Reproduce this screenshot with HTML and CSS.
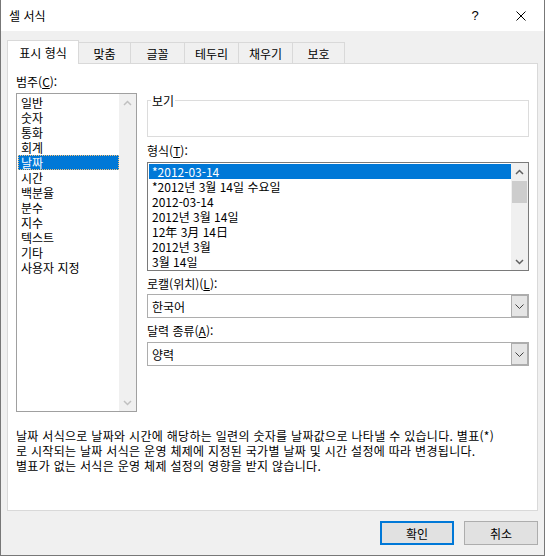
FILE: index.html
```html
<!DOCTYPE html>
<html lang="ko">
<head>
<meta charset="utf-8">
<title>셀 서식</title>
<link rel="stylesheet" href="styles.css">
</head>
<body>
<div class="window">
  <div class="titlebar">
    <span class="title">셀 서식</span>
    <span class="tbtn help">?</span>
    <span class="tbtn close"><svg width="10" height="10" viewBox="0 0 10 10"><path d="M0.5 0.5L9.5 9.5M9.5 0.5L0.5 9.5" stroke="#000" stroke-width="1" fill="none"/></svg></span>
  </div>
  <div class="tabs">
    <div class="tab sel w1">표시 형식</div>
    <div class="tab w2">맞춤</div>
    <div class="tab w3">글꼴</div>
    <div class="tab w3">테두리</div>
    <div class="tab w3">채우기</div>
    <div class="tab w2">보호</div>
  </div>
  <div class="panel">
    <div class="main">
      <div class="left">
        <div class="label">범주(<u>C</u>):</div>
        <div class="list catlist">
          <div class="items">
            <div class="item">일반</div>
            <div class="item">숫자</div>
            <div class="item">통화</div>
            <div class="item">회계</div>
            <div class="item selected focus">날짜</div>
            <div class="item">시간</div>
            <div class="item">백분율</div>
            <div class="item">분수</div>
            <div class="item">지수</div>
            <div class="item">텍스트</div>
            <div class="item">기타</div>
            <div class="item">사용자 지정</div>
          </div>
          <div class="scrollbar disabled">
            <div class="sbtn"><svg width="9" height="6" viewBox="0 0 9 6"><path d="M1 5L4.5 1.5L8 5" stroke="currentColor" stroke-width="1.5" fill="none"/></svg></div>
            <div class="track"></div>
            <div class="sbtn"><svg width="9" height="6" viewBox="0 0 9 6"><path d="M1 1L4.5 4.5L8 1" stroke="currentColor" stroke-width="1.5" fill="none"/></svg></div>
          </div>
        </div>
      </div>
      <div class="right">
        <fieldset class="preview">
          <legend>보기</legend>
          <div class="preview-body"></div>
        </fieldset>
        <div class="label gap6">형식(<u>T</u>):</div>
        <div class="list fmtlist">
          <div class="items">
            <div class="item selected">*2012-03-14</div>
            <div class="item">*2012년 3월 14일 수요일</div>
            <div class="item">2012-03-14</div>
            <div class="item">2012년 3월 14일</div>
            <div class="item">12年 3月 14日</div>
            <div class="item">2012년 3월</div>
            <div class="item">3월 14일</div>
          </div>
          <div class="scrollbar">
            <div class="sbtn"><svg width="9" height="6" viewBox="0 0 9 6"><path d="M1 5L4.5 1.5L8 5" stroke="currentColor" stroke-width="1.5" fill="none"/></svg></div>
            <div class="track"><div class="thumb"></div></div>
            <div class="sbtn"><svg width="9" height="6" viewBox="0 0 9 6"><path d="M1 1L4.5 4.5L8 1" stroke="currentColor" stroke-width="1.5" fill="none"/></svg></div>
          </div>
        </div>
        <div class="label gap5">로캘(위치)(<u>L</u>):</div>
        <div class="combo gap3">
          <span class="combo-text">한국어</span>
          <span class="dd"><svg width="9" height="5" viewBox="0 0 9 5"><path d="M0.5 0.5L4.5 4.5L8.5 0.5" stroke="#404040" stroke-width="1" fill="none"/></svg></span>
        </div>
        <div class="label gap5">달력 종류(<u>A</u>):</div>
        <div class="combo gap4">
          <span class="combo-text">양력</span>
          <span class="dd"><svg width="9" height="5" viewBox="0 0 9 5"><path d="M0.5 0.5L4.5 4.5L8.5 0.5" stroke="#404040" stroke-width="1" fill="none"/></svg></span>
        </div>
      </div>
    </div>
    <p class="desc">날짜 서식으로 날짜와 시간에 해당하는 일련의 숫자를 날짜값으로 나타낼 수 있습니다. 별표(*)<br>로 시작되는 날짜 서식은 운영 체제에 지정된 국가별 날짜 및 시간 설정에 따라 변경됩니다.<br>별표가 없는 서식은 운영 체제 설정의 영향을 받지 않습니다.</p>
  </div>
  <div class="buttons">
    <button class="btn default">확인</button>
    <button class="btn">취소</button>
  </div>
</div>
</body>
</html>
```

FILE: styles.css
```css
* { box-sizing: border-box; }
html, body { margin: 0; padding: 0; }
body {
  font-family: "Noto Sans CJK KR", "Noto Sans", sans-serif;
  font-size: 12px;
  color: #000;
  background: #fff;
}
.window {
  width: 545px;
  height: 556px;
  background: #f0f0f0;
  border: 1px solid #777;
  border-top: none;
  display: flex;
  flex-direction: column;
}
.titlebar {
  height: 31px;
  background: #fff;
  display: flex;
  align-items: center;
  padding-left: 8px;
  flex: none;
}
.title { flex: 1; line-height: 15px; }
.tbtn {
  width: 46px;
  height: 31px;
  display: flex;
  align-items: center;
  justify-content: center;
}
.help { font-family: "Liberation Sans", sans-serif; font-size: 13px; }
.tabs {
  display: flex;
  align-items: flex-end;
  height: 23px;
  margin: 9px 0 0 6px;
  flex: none;
}
.tab {
  height: 21px;
  border: 1px solid #d9d9d9;
  border-bottom: none;
  margin-left: -1px;
  background: #f0f0f0;
  display: flex;
  align-items: center;
  justify-content: center;
  white-space: nowrap;
  line-height: 15px;
}
.tab.sel {
  height: 24px;
  margin-left: 0;
  margin-bottom: -1px;
  background: #fff;
  position: relative;
  z-index: 1;
}
.w1 { width: 72px; }
.w2 { width: 53px; }
.w3 { width: 55px; }
.panel {
  margin: 0 6px;
  height: 448px;
  background: #fff;
  border: 1px solid #d9d9d9;
  padding: 10px 7px 0 8px;
  flex: none;
}
.main { display: flex; gap: 10px; }
.left { width: 121px; }
.right { width: 382px; padding-top: 19px; }
.label { height: 15px; line-height: 15px; white-space: nowrap; }
.gap6 { margin-top: 6px; }
.gap5 { margin-top: 5px; }
.gap4 { margin-top: 4px; }
.gap3 { margin-top: 3px; }
.list {
  margin-top: 4px;
  background: #fff;
  display: flex;
}
.catlist { height: 319px; border: 1px solid #a0a0a0; }
.fmtlist { height: 109px; border: 1px solid #7a7a7a; }
.items { flex: 1; padding: 1px 0 0 1px; min-width: 0; overflow: hidden; }
.item {
  height: 15px;
  line-height: 15px;
  padding-left: 3px;
  white-space: nowrap;
}
.item.selected { background: #0078d7; color: #fff; }
.item.focus { outline: 1px dotted #f7c27a; outline-offset: -1px; }
.scrollbar {
  width: 17px;
  background: #f0f0f0;
  display: flex;
  flex-direction: column;
  color: #606060;
}
.scrollbar.disabled { color: #c0c0c0; }
.sbtn {
  height: 17px;
  display: flex;
  align-items: center;
  justify-content: center;
  flex: none;
}
.track { flex: 1; padding: 1px 1px 0 1px; }
.thumb { height: 22px; background: #cdcdcd; }
.preview {
  margin: 0;
  padding: 0 4px 0 3px;
  border: 1px solid #dcdcdc;
  min-width: 0;
}
.preview legend {
  padding: 0 1px;
  line-height: 15px;
  height: 15px;
}
.preview-body { height: 28px; }
.combo {
  height: 24px;
  border: 1px solid #adadad;
  background: #fff;
  display: flex;
  align-items: center;
}
.combo-text { flex: 1; padding-left: 4px; line-height: 15px; }
.dd {
  width: 17px;
  height: 22px;
  background: #e5e5e5;
  border: 1px solid #adadad;
  display: flex;
  align-items: center;
  justify-content: center;
}
.desc {
  margin: 16px 0 0 0;
  line-height: 15px;
  white-space: nowrap;
  letter-spacing: 0.3px;
}
.buttons {
  display: flex;
  justify-content: flex-end;
  gap: 10px;
  margin: 10px 6px 0 0;
}
.btn {
  width: 74px;
  height: 24px;
  border: 1px solid #adadad;
  background: #e1e1e1;
  font: inherit;
  color: #000;
  padding: 0;
  line-height: 15px;
}
.btn.default { border: 2px solid #0078d7; }
```
